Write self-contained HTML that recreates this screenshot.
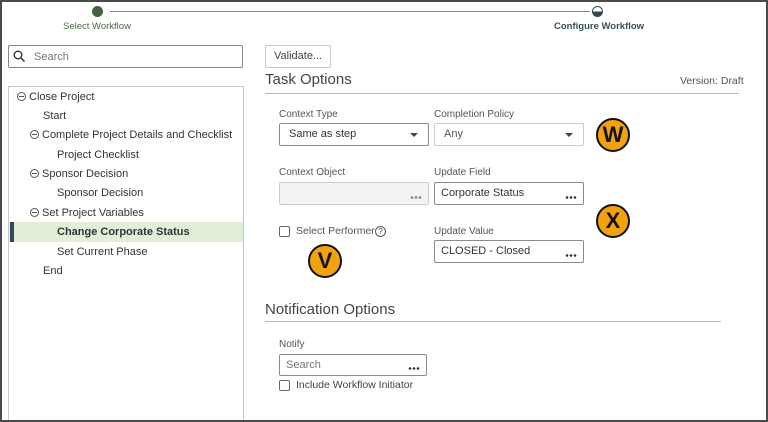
<!DOCTYPE html>
<html><head><meta charset="utf-8"><style>
*{margin:0;padding:0;box-sizing:border-box}
body{width:768px;height:422px;overflow:hidden;background:#fff;font-family:"Liberation Sans",sans-serif;color:#333;position:relative}
.frame{position:absolute;left:0;top:0;width:768px;height:422px;border:2px solid #4a4a4a}
.a{position:absolute;white-space:nowrap}
.lbl{font-size:10px;color:#555}
.box{position:absolute;border:1px solid #8a8a8a;border-radius:2px;background:#fff;font-size:11px;color:#333;padding:0 0 0 9px;line-height:21px}
.dots{position:absolute;right:6px;top:13px;width:12px;height:3px;background:radial-gradient(circle,#333 1.2px,transparent 1.4px) 0 0/4px 3px repeat-x}
.caret{position:absolute;right:10px;top:9px;width:0;height:0;border-left:4px solid transparent;border-right:4px solid transparent;border-top:4px solid #444}
.badge{position:absolute;width:34px;height:34px;border-radius:50%;background:#f2a20c;border:2px solid #111;font-weight:bold;font-size:22px;color:#111;text-align:center;line-height:30px}
.t{position:absolute;font-size:11px;color:#333;white-space:nowrap}
.m{display:inline-block;width:9px;height:9px;border:1px solid #555;border-radius:50%;position:relative;margin-right:3px;vertical-align:-1px}
.m:after{content:"";position:absolute;left:1px;right:1px;top:3px;height:1px;background:#555}
.cb{position:absolute;width:11px;height:11px;border:1px solid #666;border-radius:2px;background:#fff}
</style></head><body>
<div class="a" style="left:92px;top:6px;width:11px;height:11px;border-radius:50%;background:#44623f"></div>
<div class="a" style="left:110px;top:11px;width:480px;height:1px;background:#7d9279"></div>
<div class="a" style="left:592px;top:6px;width:11px;height:11px;border-radius:50%;border:1.5px solid #2f4856;background:linear-gradient(#fff 50%,#2f4856 50%)"></div>
<div class="a" style="left:63px;top:21px;font-size:9.5px;color:#4d6b48">Select Workflow</div>
<div class="a" style="left:554px;top:21px;font-size:9.5px;color:#34505e;font-weight:bold">Configure Workflow</div>

<div class="a" style="left:8px;top:45px;width:235px;height:23px;border:1px solid #7b8a82;border-radius:2px"></div>
<svg class="a" style="left:13px;top:50px" width="13" height="13" viewBox="0 0 13 13"><circle cx="5" cy="5" r="3.8" fill="none" stroke="#333" stroke-width="1.4"/><line x1="8" y1="8" x2="11.5" y2="11.5" stroke="#333" stroke-width="1.5"/></svg>
<div class="a" style="left:34px;top:51px;font-size:11px;color:#777">Search</div>

<div class="a" style="left:8px;top:86px;width:236px;height:336px;border:1px solid #c8c8c8;border-bottom:none"></div>
<div class="a" style="left:9px;top:222px;width:234px;height:20px;background:#e1efd9"></div>
<div class="a" style="left:10px;top:222px;width:4px;height:20px;background:#2d4d59"></div>
<div class="t" style="left:17px;top:91px"><span class="m"></span>Close Project</div>
<div class="t" style="left:43px;top:110px">Start</div>
<div class="t" style="left:30px;top:129px"><span class="m"></span>Complete Project Details and Checklist</div>
<div class="t" style="left:57px;top:149px">Project Checklist</div>
<div class="t" style="left:30px;top:168px"><span class="m"></span>Sponsor Decision</div>
<div class="t" style="left:57px;top:187px">Sponsor Decision</div>
<div class="t" style="left:30px;top:207px"><span class="m"></span>Set Project Variables</div>
<div class="t" style="left:57px;top:226px;font-weight:bold">Change Corporate Status</div>
<div class="t" style="left:57px;top:246px">Set Current Phase</div>
<div class="t" style="left:43px;top:265px">End</div>

<div class="a" style="left:265px;top:45px;width:66px;height:23px;border:1px solid #c8c8c8;border-radius:2px;font-size:11px;line-height:21px;padding-left:8px;color:#444">Validate...</div>
<div class="a" style="left:265px;top:71px;font-size:15px;color:#444">Task Options</div>
<div class="a" style="left:680px;top:75px;font-size:10.5px;color:#555">Version: Draft</div>
<div class="a" style="left:265px;top:93px;width:474px;height:1px;background:#b5bdb3"></div>

<div class="a lbl" style="left:279px;top:109px">Context Type</div>
<div class="box" style="left:279px;top:123px;width:150px;height:23px">Same as step<div class="caret"></div></div>
<div class="a lbl" style="left:434px;top:109px">Completion Policy</div>
<div class="box" style="left:434px;top:123px;width:150px;height:23px;border-color:#ccc;color:#555">Any<div class="caret"></div></div>

<div class="a lbl" style="left:279px;top:167px">Context Object</div>
<div class="box" style="left:279px;top:182px;width:150px;height:23px;background:#f3f3f3;border-color:#ccc"><div class="dots" style="opacity:.6"></div></div>
<div class="a lbl" style="left:434px;top:167px">Update Field</div>
<div class="box" style="left:434px;top:182px;width:150px;height:23px;padding-left:6px">Corporate Status<div class="dots"></div></div>

<div class="cb" style="left:279px;top:226px"></div>
<div class="a" style="left:296px;top:225px;font-size:10.5px;color:#555">Select Performer</div>
<div class="a" style="left:375px;top:226px;width:11px;height:11px;border:1px solid #555;border-radius:50%;font-size:8px;line-height:9px;text-align:center;color:#444">?</div>
<div class="a lbl" style="left:434px;top:226px">Update Value</div>
<div class="box" style="left:434px;top:240px;width:150px;height:23px;padding-left:6px">CLOSED - Closed<div class="dots"></div></div>

<div class="badge" style="left:596px;top:118px">W</div>
<div class="badge" style="left:596px;top:204px">X</div>
<div class="badge" style="left:308px;top:244px">V</div>

<div class="a" style="left:265px;top:301px;font-size:15px;color:#444">Notification Options</div>
<div class="a" style="left:265px;top:321px;width:456px;height:1px;background:#b5bdb3"></div>
<div class="a lbl" style="left:279px;top:339px">Notify</div>
<div class="box" style="left:279px;top:354px;width:148px;height:22px;padding-left:6px;color:#777;line-height:20px">Search<div class="dots" style="top:12px"></div></div>
<div class="cb" style="left:279px;top:380px"></div>
<div class="a" style="left:296px;top:379px;font-size:10.5px;color:#444">Include Workflow Initiator</div>

<div class="frame"></div>
</body></html>
